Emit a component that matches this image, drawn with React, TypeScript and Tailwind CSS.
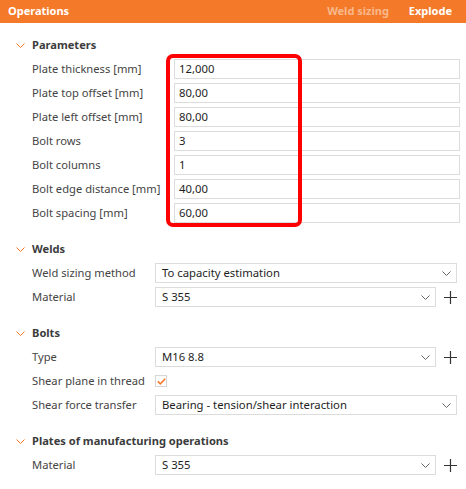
import React from "react";

const font = { fontFamily: '"Noto Sans", "Open Sans", sans-serif' };

const Chevron = ({ className }: { className?: string }) => (
  <svg width="9" height="5" viewBox="0 0 9 5" className={className} fill="none">
    <path d="M0.5 0.5 L4.5 4.5 L8.5 0.5" stroke="currentColor" strokeWidth="1" />
  </svg>
);

const Plus = () => (
  <svg width="13" height="13" viewBox="0 0 13 13" className="text-[#333]">
    <path d="M6.5 0 V13 M0 6.5 H13" stroke="currentColor" strokeWidth="1.2" />
  </svg>
);

const SectionHeader = ({ title }: { title: string }) => (
  <div className="flex items-center h-5 pl-[16px] mb-1">
    <Chevron className="text-[#f47a2a] mr-[7px]" />
    <span className="text-[11.1px] font-bold text-[#3c3c3c]">{title}</span>
  </div>
);

const Row = ({
  label,
  labelW,
  children,
}: {
  label: string;
  labelW: string;
  children: React.ReactNode;
}) => (
  <div className="flex items-center h-5 pl-[32px]">
    <div className={`${labelW} shrink-0 text-[11.2px] text-[#444] whitespace-nowrap`}>{label}</div>
    {children}
  </div>
);

const Input = ({ value }: { value: string }) => (
  <div className="flex-1 mr-[6px] h-5 border border-[#dcdcdc] bg-white flex items-center px-[4px] text-[11.3px] text-[#1e1e1e]">
    {value}
  </div>
);

const Select = ({ value, plus }: { value: string; plus?: boolean }) => (
  <div className="flex flex-1 items-center mr-[9px]">
    <div className="flex-1 h-5 border border-[#dcdcdc] bg-white flex items-center justify-between pl-[6px] pr-[5px] text-[11.3px] text-[#1e1e1e]">
      <span>{value}</span>
      <Chevron className="text-[#666]" />
    </div>
    {plus && (
      <div className="w-[21px] flex justify-end">
        <Plus />
      </div>
    )}
  </div>
);

const params = [
  ["Plate thickness [mm]", "12,000"],
  ["Plate top offset [mm]", "80,00"],
  ["Plate left offset [mm]", "80,00"],
  ["Bolt rows", "3"],
  ["Bolt columns", "1"],
  ["Bolt edge distance [mm]", "40,00"],
  ["Bolt spacing [mm]", "60,00"],
];

export default function App() {
  return (
    <div className="w-[466px] h-[489px] bg-white overflow-hidden relative" style={font}>
      <div className="h-[23px] bg-[#f47a2a] flex items-center pl-[8px] pr-[14px] text-[11px] font-bold">
        <span className="text-white">Operations</span>
        <span className="ml-auto text-[#f9b88c]">Weld sizing</span>
        <span className="ml-[20px] text-white">Explode</span>
      </div>

      <div className="pt-[12px]">
        <SectionHeader title="Parameters" />
        <div className="flex flex-col gap-1">
          {params.map(([l, v]) => (
            <Row key={l} label={l} labelW="w-[142px]">
              <Input value={v} />
            </Row>
          ))}
        </div>

        <div className="mt-4">
          <SectionHeader title="Welds" />
          <div className="flex flex-col gap-1">
            <Row label="Weld sizing method" labelW="w-[123px]">
              <Select value="To capacity estimation" />
            </Row>
            <Row label="Material" labelW="w-[123px]">
              <Select value="S 355" plus />
            </Row>
          </div>
        </div>

        <div className="mt-4">
          <SectionHeader title="Bolts" />
          <div className="flex flex-col gap-1">
            <Row label="Type" labelW="w-[123px]">
              <Select value="M16 8.8" plus />
            </Row>
            <Row label="Shear plane in thread" labelW="w-[123px]">
              <div className="w-[12px] h-[12px] border border-[#d6d6d6] bg-white flex items-center justify-center">
                <svg width="9" height="7" viewBox="0 0 9 7" fill="none">
                  <path d="M0.8 3.4 L3.3 5.8 L8.2 0.8" stroke="#f47a2a" strokeWidth="1.6" />
                </svg>
              </div>
            </Row>
            <Row label="Shear force transfer" labelW="w-[123px]">
              <Select value="Bearing - tension/shear interaction" />
            </Row>
          </div>
        </div>

        <div className="mt-4">
          <SectionHeader title="Plates of manufacturing operations" />
          <div className="flex flex-col gap-1">
            <Row label="Material" labelW="w-[123px]">
              <Select value="S 355" plus />
            </Row>
          </div>
        </div>
      </div>

      <div className="absolute left-[166px] top-[54px] w-[136px] h-[173px] border-4 border-[#ff0000] rounded-[7px] pointer-events-none" />
    </div>
  );
}
